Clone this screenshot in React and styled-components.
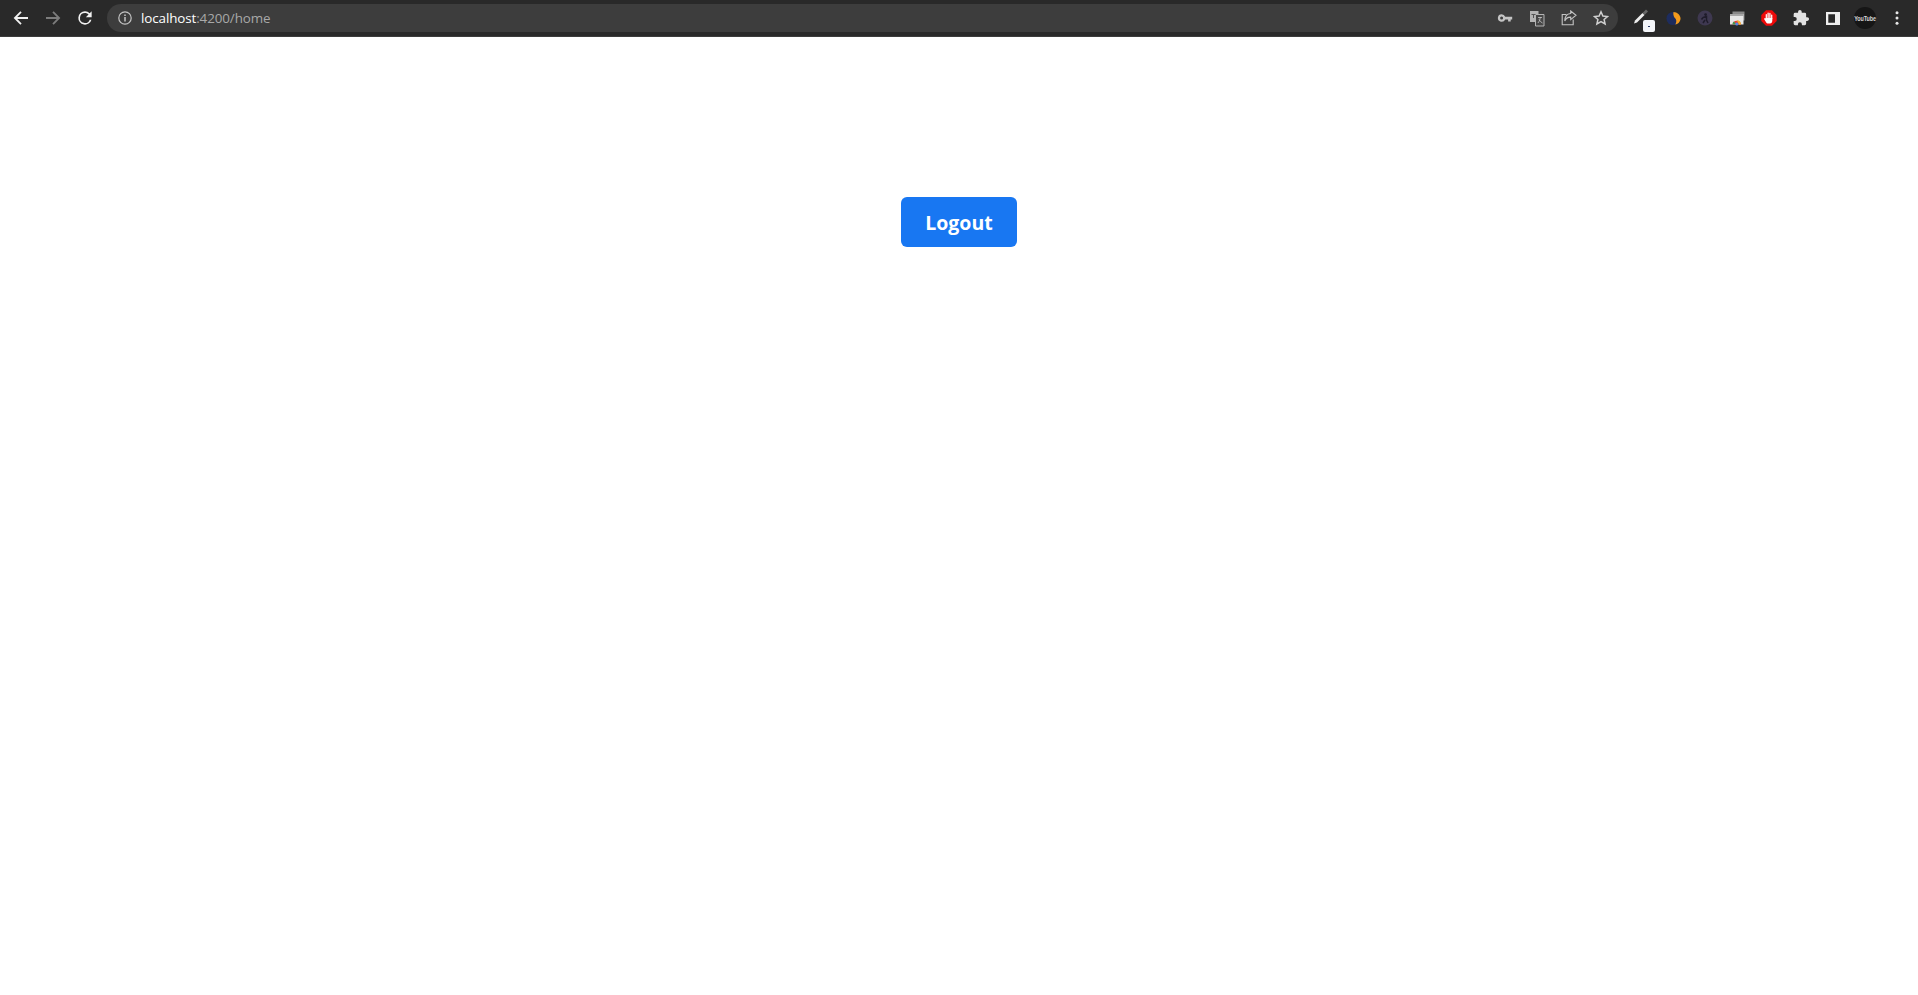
import React from "react";
import styled, { createGlobalStyle } from "styled-components";

const Global = createGlobalStyle`
  html, body { margin: 0; padding: 0; background: #fff; height: 100%; overflow: hidden; }
  #root { height: 100%; }
`;
const Page = styled.div`display:flex;flex-direction:column;height:995px;`;
const Toolbar = styled.header`
  height: 37px; box-sizing: border-box; flex: none; background: #292929;
  border-bottom: 1px solid #3c3c3c; display: flex; align-items: center; padding-left: 5px;
`;
const NavIcon = styled.span`
  width: 32px; height: 32px; flex: none; display: flex; align-items: center; justify-content: center;
`;
const Omnibox = styled.div`
  margin-left: 6px; width: 1511px; height: 28px; border-radius: 14px; background: #3d3d3d; flex: none;
  display: flex; align-items: center; padding: 0 1px 0 10px; box-sizing: border-box;
`;
const UrlText = styled.span`
  margin-left: 8px; flex: 1; font: 13.4px "Open Sans", "Noto Sans", sans-serif; color: #a8a8a8; letter-spacing: -0.1px;
`;
const Host = styled.span`color: #fff;`;
const BoxIcon = styled.span`
  width: 32px; height: 24px; display: flex; align-items: center; justify-content: center; flex: none;
`;
const Extensions = styled.div`
  display: flex; align-items: center; margin-left: 7px; flex: none;
`;
const ExtIcon = styled.span`
  width: 32px; height: 32px; position: relative; display: flex; align-items: center; justify-content: center; flex: none;
`;
const Badge = styled.span`
  position: absolute; right: 2px; bottom: 2px; width: 12px; height: 12px; background: #f4f6fa; border-radius: 2px;
  display: flex; align-items: center; justify-content: center;
  &::after { content: ""; width: 2px; height: 1px; background: #2a3a6a; }
`;
const Avatar = styled.span`
  width: 22px; height: 22px; border-radius: 50%; background: #161616;
  display: flex; align-items: center; justify-content: center;
`;
const AvatarLabel = styled.span`
  color: #d8d8d8; font: 700 5.4px "Liberation Sans", sans-serif; letter-spacing: -0.1px;
  white-space: nowrap; transform: scaleY(1.45);
`;
const Content = styled.main`flex: 1; display: flex; justify-content: center; padding-top: 160px;`;
const LogoutButton = styled.button`
  width: 116px; height: 50px; border: 0; border-radius: 6px; background: #1877f2; color: #fff;
  font: 700 19.5px "Open Sans", sans-serif; cursor: pointer; padding: 0;
`;

const Back = ({ color = "#f1f1f1", flip }) => (
  <svg width="16" height="16" viewBox="0 0 16 16" fill="none" stroke={color} strokeWidth="1.8"
    style={flip ? { transform: "scaleX(-1)" } : undefined}>
    <path d="M15 8H2M8 1.8 1.9 8 8 14.2" />
  </svg>
);
const Reload = () => (
  <svg width="16" height="16" viewBox="0 0 24 24" fill="#f1f1f1" style={{ transform: "scale(1.25)" }}>
    <path d="M17.65 6.35A7.96 7.96 0 0 0 12 4a8 8 0 1 0 7.73 10h-2.08A6 6 0 1 1 12 6c1.66 0 3.14.69 4.22 1.78L13 11h7V4z" />
  </svg>
);
const Info = () => (
  <svg width="16" height="16" viewBox="0 0 16 16" fill="none" stroke="#c4c4c4" strokeWidth="1.2">
    <circle cx="8" cy="8" r="6.2" />
    <path d="M8 7v4.4M8 4.4v1.5" strokeWidth="1.5" />
  </svg>
);
const Key = () => (
  <svg width="16" height="16" viewBox="0 0 16 16" fill="#c4c4c4">
    <path fillRule="evenodd" d="M4.6 4.2a3.8 3.8 0 0 1 3.6 2.6h7v2.6h-1.5v2h-2.6v-2H8.2a3.8 3.8 0 1 1-3.6-5.2zm0 2.3a1.5 1.5 0 1 0 0 3 1.5 1.5 0 0 0 0-3z" />
  </svg>
);
const Translate = () => (
  <svg width="16" height="17" viewBox="0 0 16 17">
    <path d="M1 1h8.5v11H1z" fill="#b4b4b4" />
    <path d="M6.5 4.5h8.5v11.5H6.5z" fill="#474747" stroke="#b4b4b4" strokeWidth="1" />
    <path d="M2.5 4.5h4M4.5 4v4" fill="none" stroke="#555" strokeWidth="1" />
    <path d="M9 7.5h4M11.2 7c0 2.5-1 4.5-2.3 6M10 9.500c.8 1.5 2 2.8 3.5 3.5" fill="none" stroke="#c8c8c8" strokeWidth=".8" />
  </svg>
);
const Share = () => (
  <svg width="16" height="16" viewBox="0 0 16 16" fill="none" stroke="#c4c4c4" strokeWidth="1.1">
    <path d="M5.5 4.5H1.2v10.2h11V9.5" />
    <path d="M9.7 1 15 5.3 9.7 9.6V7.1C7 7 5 8 3.8 11 3.8 6.5 6 3.8 9.7 3.5z" />
  </svg>
);
const Star = () => (
  <svg width="16" height="16" viewBox="0 0 16 16" fill="none" stroke="#d0d0d0" strokeWidth="1.5">
    <path d="M8 1.8 9.9 6l4.6.5-3.4 3 1 4.5L8 11.7 3.9 14l1-4.5-3.4-3L6.1 6z" />
  </svg>
);
const Pen = () => (
  <svg width="16" height="16" viewBox="0 0 16 16" style={{ transform: "translate(0,-1.5px)" }}>
    <path d="M1 15 2 12 9.5 4.5 11.5 6.5 4 14z" fill="#eee" />
    <path d="M9.5 4.5 13 1l2 2-3.5 3.5z" fill="#666" />
  </svg>
);
const Moon = () => (
  <svg width="15" height="15" viewBox="0 0 16 16">
    <circle cx="7.5" cy="8" r="7" fill="#1d2c5e" />
    <path d="M8 1C12 1 15.5 4.5 15.5 8c0 3-2.5 6-5.5 6.5 1.5-3 1.5-5.5-1-7.500C8 5 7.5 3 8 1z" fill="#f39a1c" />
  </svg>
);
const Runner = () => (
  <svg width="16" height="16" viewBox="0 0 16 16">
    <circle cx="8" cy="8" r="7.5" fill="#3e3850" />
    <circle cx="8.6" cy="4.6" r="1.4" fill="#1f1c2a" />
    <path d="M6 7.5 9.5 6.5 9.5 10 11 13M8 10 6 13M4.5 9.5 6 7.5" fill="none" stroke="#1f1c2a" strokeWidth="1.5" />
  </svg>
);
const Cast = () => (
  <svg width="16" height="16" viewBox="0 0 16 16">
    <path d="M3.5 1.5h12v9h-12z" fill="#8a8a8a" />
    <path d="M1 4h13.5v10.5H1z" fill="#e8e8e8" />
    <path d="M1 4h13.5v2H1z" fill="#a8a8a8" />
    <path d="M3.5 14.5a4.3 4.3 0 0 1 8.5 0z" fill="#e2453a" />
    <path d="M7.8 10.3a4.3 4.3 0 0 1 4.2 4.2H10z" fill="#f2b632" />
    <path d="M3.5 14.5a4.3 4.3 0 0 1 1.3-3l1.7 1.7-.5 1.3z" fill="#3e9a50" />
    <circle cx="7.8" cy="14" r="1.5" fill="#4a88e8" />
  </svg>
);
const Adblock = () => (
  <svg width="16" height="16" viewBox="0 0 16 16">
    <path d="M5 .3h6L15.7 5v6L11 15.700H5L.3 11V5z" fill="#ee0a0a" />
    <path d="M5.3 8.500V4.500M7.100 8V3M8.900 8V3.400M10.700 8.500V5" fill="none" stroke="#fff" strokeWidth="1.250" strokeLinecap="round" />
    <path d="M4.700 8h6.600v2.500c0 1.700-.9 3-2.300 3H7.200c-1 0-1.700-.5-2.300-1.500L3.200 9.300c-.4-.7.400-1.300 1-.8z" fill="#fff" />
  </svg>
);
const Puzzle = () => (
  <svg width="16" height="16" viewBox="0 0 24 24" fill="#e2e2e2" style={{ transform: "scale(1.1)" }}>
    <path d="M20.5 11H19V7a2 2 0 0 0-2-2h-4V3.5a2.5 2.5 0 0 0-5 0V5H4a2 2 0 0 0-2 2v3.800h1.500a2.700 2.700 0 0 1 0 5.400H2V20a2 2 0 0 0 2 2h3.800v-1.500a2.700 2.700 0 0 1 5.400 0V22H17a2 2 0 0 0 2-2v-4h1.500a2.500 2.500 0 0 0 0-5z" />
  </svg>
);
const SidePanel = () => (
  <svg width="16" height="16" viewBox="0 0 16 16">
    <path fillRule="evenodd" d="M1 2h14v13H1zM3.300 4.300v8.400h6.700V4.300z" fill="#efefef" />
  </svg>
);
const Dots = () => (
  <svg width="16" height="16" viewBox="0 0 16 16" fill="#e8e8e8">
    <circle cx="8" cy="2.800" r="1.500" /><circle cx="8" cy="8" r="1.500" /><circle cx="8" cy="13.200" r="1.500" />
  </svg>
);

export default function App() {
  return (
    <Page>
      <Global />
      <Toolbar>
        <NavIcon><Back /></NavIcon>
        <NavIcon><Back color="#7c7c7c" flip /></NavIcon>
        <NavIcon><Reload /></NavIcon>
        <Omnibox>
          <Info />
          <UrlText><Host>localhost</Host>:4200/home</UrlText>
          <BoxIcon><Key /></BoxIcon>
          <BoxIcon><Translate /></BoxIcon>
          <BoxIcon><Share /></BoxIcon>
          <BoxIcon><Star /></BoxIcon>
        </Omnibox>
        <Extensions>
          <ExtIcon><Pen /><Badge /></ExtIcon>
          <ExtIcon><Moon /></ExtIcon>
          <ExtIcon><Runner /></ExtIcon>
          <ExtIcon><Cast /></ExtIcon>
          <ExtIcon><Adblock /></ExtIcon>
          <ExtIcon><Puzzle /></ExtIcon>
          <ExtIcon><SidePanel /></ExtIcon>
          <ExtIcon><Avatar><AvatarLabel>YouTube</AvatarLabel></Avatar></ExtIcon>
          <ExtIcon><Dots /></ExtIcon>
        </Extensions>
      </Toolbar>
      <Content>
        <LogoutButton>Logout</LogoutButton>
      </Content>
    </Page>
  );
}
